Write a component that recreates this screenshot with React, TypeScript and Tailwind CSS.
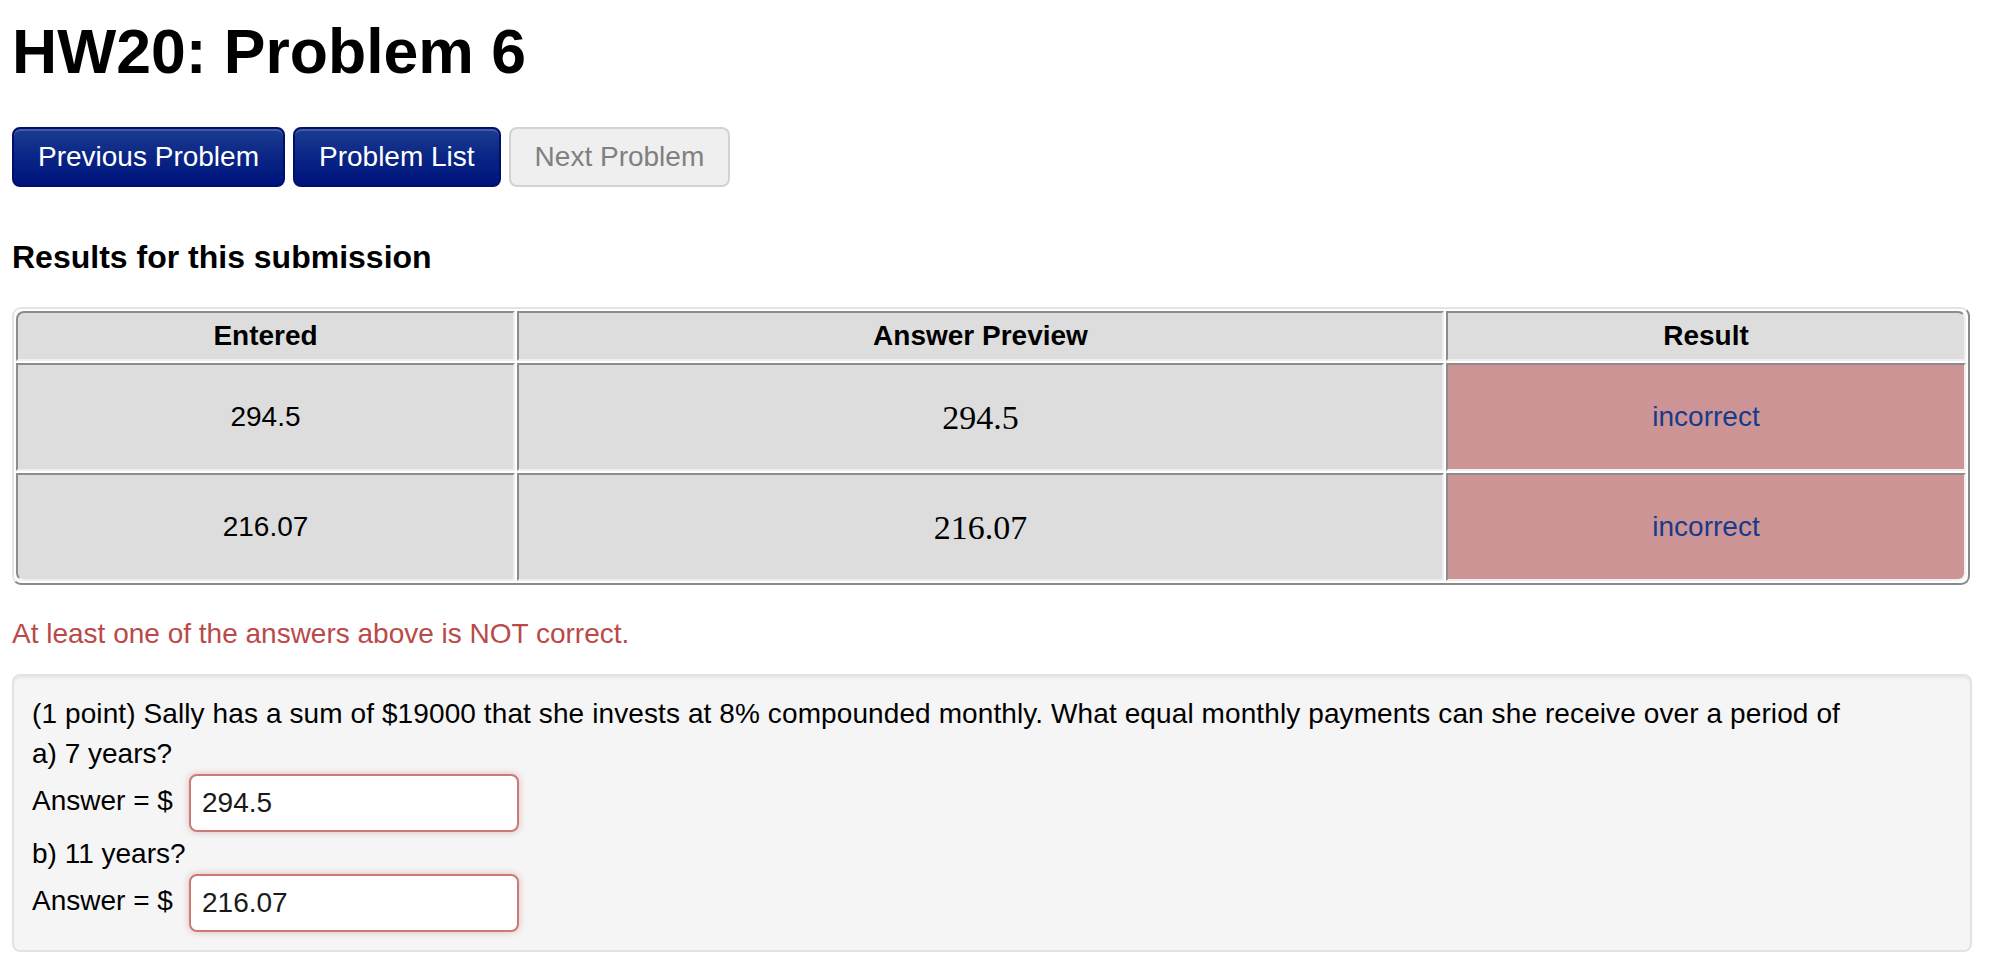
import React from 'react'

const rows = [
  { entered: '294.5', preview: '294.5', result: 'incorrect' },
  { entered: '216.07', preview: '216.07', result: 'incorrect' },
]

function NavButton({ label, disabled }: { label: string; disabled?: boolean }) {
  if (disabled) {
    return (
      <button
        disabled
        className="h-[60px] px-[24px] text-[28px] leading-[40px] rounded-[8px] border-2 border-[#d3d3d3] bg-[#efefef] text-[#808080]"
      >
        {label}
      </button>
    )
  }
  return (
    <button className="h-[60px] px-[24px] text-[28px] leading-[40px] rounded-[8px] border-2 border-[#00106a] bg-linear-to-b from-[#1b3b90] via-[#0a2585] to-[#00137e] text-white shadow-[inset_0_2px_0_rgba(255,255,255,0.18)]">
      {label}
    </button>
  )
}

const cellBorder = 'border-2 border-t-[#8c8c8c] border-l-[#8c8c8c] border-b-[#efefef] border-r-[#efefef]'

function AnswerLine({ value, last }: { value: string; last?: boolean }) {
  return (
    <div className={`flex items-start ${last ? 'h-[58px]' : 'h-[60px]'}`}>
      <span className="w-[157px] mt-[7px] leading-[40px]">Answer = $</span>
      <input
        readOnly
        value={value}
        className="w-[330px] h-[58px] px-[11px] text-[28px] text-[#1a1a1a] bg-white rounded-[8px] border-2 border-[#c87b79] shadow-[0_0_7px_rgba(185,74,72,0.35)] outline-none font-['Liberation_Sans',Arial,sans-serif]"
      />
    </div>
  )
}

export default function App() {
  return (
    <div className="min-h-screen bg-white text-black font-['Liberation_Sans',Arial,Helvetica,sans-serif] pl-[12px]">
      <h1 className="pt-[20px] text-[62.5px] leading-[62px] font-bold">HW20: Problem 6</h1>

      <div className="mt-[45px] flex gap-[8px]">
        <NavButton label="Previous Problem" />
        <NavButton label="Problem List" />
        <NavButton label="Next Problem" disabled />
      </div>

      <h3 className="mt-[54px] text-[32px] leading-[32px] font-bold">Results for this submission</h3>

      {/* results table */}
      <div className="mt-[34px] w-[1958px] grid grid-cols-[499px_927px_520px] gap-[2px] p-[2px] bg-white rounded-[9px] border-2 border-t-[#e4e4e4] border-l-[#e4e4e4] border-b-[#8a8a8a] border-r-[#8a8a8a]">
        <div className={`${cellBorder} h-[50px] bg-[#dddddd] rounded-tl-[8px] flex items-center justify-center text-[28px] font-bold`}>Entered</div>
        <div className={`${cellBorder} h-[50px] bg-[#dddddd] flex items-center justify-center text-[28px] font-bold`}>Answer Preview</div>
        <div className={`${cellBorder} h-[50px] bg-[#dddddd] rounded-tr-[8px] flex items-center justify-center text-[28px] font-bold`}>Result</div>
        {rows.map((r, i) => (
          <React.Fragment key={i}>
            <div className={`${cellBorder} h-[108px] bg-[#dddddd] flex items-center justify-center text-[28px] ${i === rows.length - 1 ? 'rounded-bl-[8px]' : ''}`}>
              {r.entered}
            </div>
            <div className={`${cellBorder} h-[108px] bg-[#dddddd] flex items-center justify-center text-[34px] font-['Liberation_Serif','Times_New_Roman',serif]`}>
              {r.preview}
            </div>
            <div className={`${cellBorder} h-[108px] bg-[#cc9494] flex items-center justify-center text-[28px] text-[#183a8c] ${i === rows.length - 1 ? 'rounded-br-[8px]' : ''}`}>
              {r.result}
            </div>
          </React.Fragment>
        ))}
      </div>

      <p className="mt-[29px] text-[28px] leading-[40px] text-[#b94a48]">At least one of the answers above is NOT correct.</p>

      {/* problem body */}
      <div className="mt-[20px] w-[1960px] h-[278px] px-[18px] pt-[18px] bg-[#f5f5f5] border-2 border-[#e3e3e3] rounded-[8px] shadow-[inset_0_2px_2px_rgba(0,0,0,0.05)] text-[28px] leading-[40px]">
        <div className="tracking-[0.1px]">(1 point) Sally has a sum of $19000 that she invests at 8% compounded monthly. What equal monthly payments can she receive over a period of</div>
        <div>a) 7 years?</div>
        <AnswerLine value="294.5" />
        <div>b) 11 years?</div>
        <AnswerLine value="216.07" last />
      </div>
    </div>
  )
}
